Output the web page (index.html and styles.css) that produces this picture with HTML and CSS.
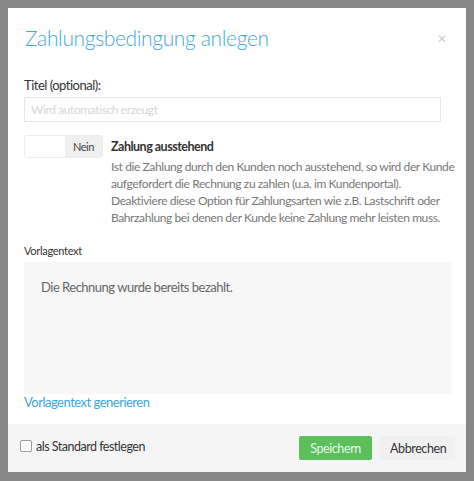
FILE: index.html
```html
<!DOCTYPE html>
<html lang="de">
<head>
<meta charset="UTF-8">
<meta name="viewport" content="width=device-width, initial-scale=1.0">
<title>Zahlungsbedingung anlegen</title>
<link rel="stylesheet" href="styles.css">
</head>
<body>

<div class="modal">
    <div class="modal-header">
        <h3>Zahlungsbedingung anlegen</h3>
        <span class="close">&times;</span>
    </div>

    <div class="modal-body">
        <label class="field-label" for="title">Titel (optional):</label>
        <input type="text" id="title" class="text-input" placeholder="Wird automatisch erzeugt">

        <div class="option">
            <div class="toggle">
                <span class="toggle-on"></span>
                <span class="toggle-off">Nein</span>
            </div>
            <div class="option-text">
                <strong>Zahlung ausstehend</strong>
                <p>Ist die Zahlung durch den Kunden noch ausstehend, so wird der Kunde aufgefordert die Rechnung zu zahlen (u.a. im Kundenportal). Deaktiviere diese Option für Zahlungsarten wie z.B. Lastschrift oder Bahrzahlung bei denen der Kunde keine Zahlung mehr leisten muss.</p>
            </div>
        </div>

        <div class="small-label">Vorlagentext</div>
        <div class="template">Die Rechnung wurde bereits bezahlt.</div>
        <a href="#" class="link">Vorlagentext generieren</a>
    </div>

    <div class="modal-footer">
        <label class="check"><span class="box"></span>als Standard festlegen</label>
        <div class="buttons">
            <button class="btn btn-save">Speichern</button>
            <button class="btn btn-cancel">Abbrechen</button>
        </div>
    </div>
</div>

</body>
</html>
```
FILE: styles.css
```css
body {
    margin: 0;
    background: #878787;
    font-family: Lato, "Open Sans", sans-serif;
    color: #333;
    letter-spacing: -0.5px;
}
.modal {
    margin: 8px;
    width: 458px;
    height: 464px;
    background: #fff;
    display: flex;
    flex-direction: column;
}
.modal-header {
    display: flex;
    justify-content: space-between;
    align-items: center;
    padding: 13px 20px 0 17px;
    height: 32px;
    flex-shrink: 0;
}
.modal-header h3 {
    margin: 0;
    font-size: 21px;
    font-weight: 300;
    letter-spacing: -0.35px;
    color: #45a9de;
}
.close {
    color: #c8c8c8;
    font-size: 16px;
}
.modal-body {
    padding: 24px 6px 0 16px;
    flex: 1;
    overflow: hidden;
}
.field-label {
    display: block;
    font-size: 13px;
    line-height: 16px;
    margin-bottom: 4px;
}
.text-input {
    box-sizing: border-box;
    width: 417px;
    height: 25px;
    border: 1px solid #e6e6e6;
    padding: 0 6px;
    font-family: inherit;
    font-size: 12px;
    letter-spacing: -0.4px;
}
.text-input::placeholder {
    color: #d6d6d6;
}
.option {
    display: flex;
    gap: 8px;
    margin-top: 13px;
}
.toggle {
    display: flex;
    width: 79px;
    height: 23px;
    border: 1px solid #ececec;
    border-radius: 3px;
    box-sizing: border-box;
    overflow: hidden;
    flex-shrink: 0;
}
.toggle-on {
    width: 40px;
    background: #fff;
}
.toggle-off {
    flex: 1;
    background: #efefef;
    font-size: 11px;
    text-align: center;
    line-height: 21px;
    color: #444;
}
.option-text {
    flex: 1;
}
.option-text strong {
    display: block;
    font-size: 12.5px;
    line-height: 16px;
    margin-top: 4px;
}
.option-text p {
    margin: 3px 0 0;
    max-width: 347px;
    font-size: 12px;
    line-height: 17px;
    letter-spacing: -0.4px;
    color: #777;
}
.small-label {
    margin-top: 18px;
    font-size: 11px;
    letter-spacing: -0.3px;
    line-height: 14px;
}
.template {
    margin-top: 4px;
    width: 427px;
    height: 132px;
    box-sizing: border-box;
    background: #f7f7f7;
    padding: 17px 17px;
    font-size: 13px;
    line-height: 16px;
    color: #666;
}
.link {
    display: block;
    margin-top: 1px;
    font-size: 13px;
    line-height: 14px;
    color: #3aa6dc;
    text-decoration: none;
}
.modal-footer {
    height: 48px;
    flex-shrink: 0;
    background: #f5f5f5;
    display: flex;
    justify-content: space-between;
    align-items: center;
    padding: 0 11px 0 12px;
}
.check {
    display: flex;
    align-items: center;
    gap: 4px;
    font-size: 12.5px;
    margin-bottom: 4px;
}
.box {
    width: 10px;
    height: 10px;
    border: 1px solid #999;
    border-radius: 2px;
    background: #fff;
}
.buttons {
    display: flex;
    gap: 8px;
}
.btn {
    height: 24px;
    border: 0;
    border-radius: 2px;
    padding: 0 10px;
    font-family: inherit;
    font-size: 12.5px;
    letter-spacing: -0.4px;
}
.btn-save {
    background: #5cbf5c;
    color: #eaf7ea;
    width: 73px;
}
.btn-cancel {
    background: #f0f0f0;
    color: #333;
    width: 75px;
}
```
